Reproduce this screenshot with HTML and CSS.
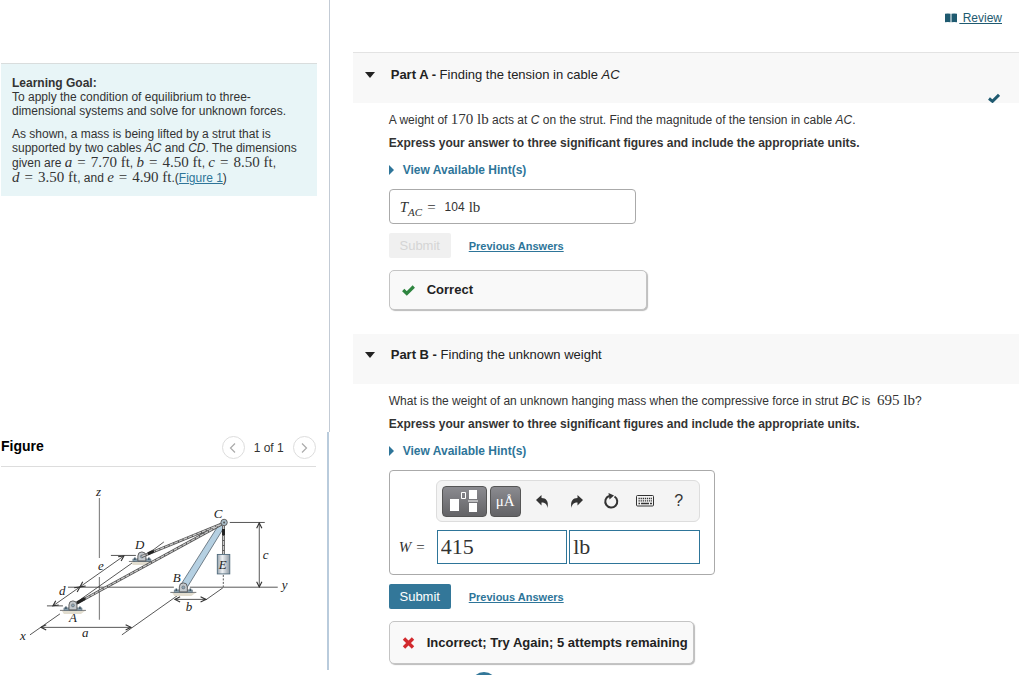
FILE: index.html
```html
<!DOCTYPE html>
<html lang="en">
<head>
    <meta charset="UTF-8">
    <meta name="viewport" content="width=device-width, initial-scale=1.0">
    <title>Cables and Strut</title>
    <link rel="stylesheet" href="styles.css">
</head>
<body>

<div class="page">
    <aside class="sidebar">
        <div class="goal-pane">
            <div class="goal">
                <h2>Learning Goal:</h2>
                <p>To apply the condition of equilibrium to three-dimensional systems and solve for unknown forces.</p>
                <p>As shown, a mass is being lifted by a strut that is supported by two cables <i>AC</i> and <i>CD</i>. The dimensions given are <span class="math"><i>a</i><span class="eq">=</span>7.70 ft</span>, <span class="math"><i>b</i><span class="eq">=</span>4.50 ft</span>, <span class="math"><i>c</i><span class="eq">=</span>8.50 ft</span>, <span class="math"><i>d</i><span class="eq">=</span>3.50 ft</span>, and <span class="math"><i>e</i><span class="eq">=</span>4.90 ft</span>.(<a href="#figure">Figure 1</a>)</p>
            </div>
        </div>

        <section class="figure" id="figure">
            <div class="figure-head">
                <h2>Figure</h2>
                <div class="pager">
                    <button type="button" aria-label="Previous figure"><svg width="10" height="12" viewBox="0 0 10 12"><path d="M7 1.500 2.500 6 7 10.500"/></svg></button>
                    <span>1 of 1</span>
                    <button type="button" aria-label="Next figure"><svg width="10" height="12" viewBox="0 0 10 12"><path d="M3 1.500 7.500 6 3 10.500"/></svg></button>
                </div>
            </div>
            <svg class="diagram" viewBox="0 480 316 170">
                <defs>
                    <marker id="tip" viewBox="0 0 8 8" refX="7" refY="4" markerWidth="7" markerHeight="7" markerUnits="userSpaceOnUse" orient="auto-start-reverse">
                        <path d="M1 1 7 4 1 7" fill="none" stroke="#333" stroke-width="1.3"/>
                    </marker>
                    <linearGradient id="metal">
                        <stop offset="0" stop-color="#98a3ad"/>
                        <stop offset=".4" stop-color="#eef1f4"/>
                        <stop offset="1" stop-color="#8e99a3"/>
                    </linearGradient>
                    <g id="support">
                        <path d="M-11 6H12L8 9-9 9Z" fill="#e2ddcf"/>
                        <path d="M-13 5.500H13" stroke="#555" stroke-width=".8"/>
                        <path d="M-9 3H9V5.500H-9Z" fill="#8aa0ae" stroke="#526572" stroke-width=".6"/>
                        <path d="M-7 1.500V4M7 1.500V4" stroke="#3f5665" stroke-width="1.600"/>
                        <path d="M-4 5V0A4 4 0 0 1 4 0V5Z" fill="#c3c9ce" stroke="#555" stroke-width=".9"/>
                        <circle cy="0.500" r="1.500" fill="#8ba5b6" stroke="#555" stroke-width=".5"/>
                    </g>
                </defs>

                <!-- axes -->
                <path class="axis" d="M99.500 498V558M99.500 577V620"/>
                <path class="line" d="M68 587.300H174M190 587.300H278M138 559 80 600M60 614 30 635M122 635 180 594M223 588 206 600"/>
                <!-- dimensions -->
                <path class="line" d="M111 555.500H136M47 606H63M230 522.500H265"/>
                <path class="dim" d="M124 556 80 587"/>
                <path class="dim" d="M80 587 53 606"/>
                <path class="dim" d="M41 627.500H131"/>
                <path class="dim" d="M175 599.500H206"/>
                <path class="dim" d="M259.500 523V587"/>

                <use href="#support" x="142" y="556"/>
                <!-- strut BC -->
                <path d="M181.500 584 219.500 524 224.500 527 187 588Z" fill="#b5d0e2" stroke="#55636e" stroke-width=".8"/>
                <!-- cables -->
                <path class="rope" d="M73 605.500 224 523M142 556.500 224 523M223.700 526V554"/>
                <path class="rope-twist" d="M73 605.500 224 523M142 556.500 224 523M223.700 526V554"/>
                <path class="knot" d="M77 603 85 598.500M148 554 154 551M223.700 529V535"/>
                <path class="line" d="M152 551 164 542"/>
                <use href="#support" x="73" y="605"/>
                <use href="#support" x="183.500" y="587"/>
                <circle cx="224.300" cy="522.500" r="3.200" fill="#a9bdc9" stroke="#555" stroke-width=".9"/>
                <circle cx="224.300" cy="522.500" r="1" fill="#555"/>
                <rect x="217.500" y="554.500" width="12.500" height="19.500" fill="url(#metal)" stroke="#4f6a7c" stroke-width=".9"/>
                <path class="line dash" d="M223.500 575V587"/>

                <text x="96" y="496">z</text>
                <text x="214" y="518">C</text>
                <text x="135" y="549">D</text>
                <text x="98" y="570">e</text>
                <text x="263" y="559">c</text>
                <text x="219" y="569">E</text>
                <text x="173" y="582">B</text>
                <text x="282" y="589">y</text>
                <text x="59" y="595">d</text>
                <text x="186" y="611">b</text>
                <text x="69" y="622">A</text>
                <text x="82" y="637">a</text>
                <text x="20" y="640">x</text>
            </svg>
        </section>
    </aside>

    <main class="content">
        <div class="topbar">
            <a class="review" href="#review"><svg width="12" height="10" viewBox="0 0 12 10"><path d="M0 .8Q3 0 5.500 .8V9.300Q3 8.500 0 9.300ZM6.500 .8Q9 0 12 .8V9.300Q9 8.500 6.500 9.300Z" fill="#1f5a70"/></svg><span>&nbsp;Review</span></a>
        </div>

        <section class="part">
            <header class="part-head lined">
                <svg class="caret" width="10" height="6" viewBox="0 0 10 6"><path d="M0 0H10L5 6Z"/></svg>
                <h3><b>Part A -</b> Finding the tension in cable <i>AC</i></h3>
                <svg class="done" width="12" height="10" viewBox="0 0 12 10"><path d="M1 5.500 4.500 8.300 11 1.800" fill="none" stroke="#1f5a70" stroke-width="3"/></svg>
            </header>
            <div class="part-body">
                <p>A weight of <span class="math">170 lb</span> acts at <i>C</i> on the strut. Find the magnitude of the tension in cable <i>AC</i>.</p>
                <p class="strong">Express your answer to three significant figures and include the appropriate units.</p>
                <a class="hints" href="#hints-a"><svg width="5" height="10" viewBox="0 0 5 10"><path d="M0 0 5 5 0 10Z"/></svg>View Available Hint(s)</a>
                <div class="answer"><span class="math"><i>T<sub>AC</sub></i><span class="eq">=</span></span><span class="value">104</span><span class="math">lb</span></div>
                <div class="actions">
                    <button class="submit" type="button" disabled>Submit</button>
                    <a href="#previous-a">Previous Answers</a>
                </div>
                <div class="feedback correct">
                    <svg width="13" height="11" viewBox="0 0 13 11"><path d="M1.200 5 4.800 8.500 11.800 1.500" fill="none" stroke="#2f8540" stroke-width="3.200"/></svg>
                    Correct
                </div>
            </div>
        </section>

        <section class="part">
            <header class="part-head">
                <svg class="caret" width="10" height="6" viewBox="0 0 10 6"><path d="M0 0H10L5 6Z"/></svg>
                <h3><b>Part B -</b> Finding the unknown weight</h3>
            </header>
            <div class="part-body">
                <p>What is the weight of an unknown hanging mass when the compressive force in strut <i>BC</i> is &nbsp;<span class="math">695 lb</span>?</p>
                <p class="strong">Express your answer to three significant figures and include the appropriate units.</p>
                <a class="hints" href="#hints-b"><svg width="5" height="10" viewBox="0 0 5 10"><path d="M0 0 5 5 0 10Z"/></svg>View Available Hint(s)</a>
                <div class="editor">
                    <div class="toolbar">
                        <button class="dark wide" type="button" aria-label="Templates">
                            <svg width="28" height="24" viewBox="0 0 28 24"><path d="M0 10H9V22H0ZM19 1H27V10H19ZM19 14H27V23H19ZM18 11.500H28V12.500H18Z" fill="#fff"/><path d="M11.500 3.500H15.500V9.500H11.500Z" fill="none" stroke="#fff"/></svg>
                        </button>
                        <button class="dark" type="button">μÅ</button>
                        <button class="tool" type="button" aria-label="Undo">
                            <svg width="13" height="13" viewBox="0 0 13 13"><path d="M0 5 5.500 0V3C10 3 13 6 11.500 13 11 9 9 7.500 5.500 7.500V10.500Z"/></svg>
                        </button>
                        <button class="tool" type="button" aria-label="Redo">
                            <svg width="13" height="13" viewBox="0 0 13 13"><path d="M13 5 7.500 0V3C3 3 0 6 1.500 13 2 9 4 7.500 7.500 7.500V10.500Z"/></svg>
                        </button>
                        <button class="tool" type="button" aria-label="Reset">
                            <svg width="16" height="16" viewBox="0 0 16 16"><path d="M11.500 3.500A6 6 0 1 1 6 3" fill="none" stroke="#333" stroke-width="2"/><path d="M5.500 0 11 2.500 6.500 6.500Z"/></svg>
                        </button>
                        <button class="tool" type="button" aria-label="Keyboard">
                            <svg width="18" height="12" viewBox="0 0 18 12"><rect x=".5" y=".5" width="17" height="10.500" rx="1" fill="none" stroke="#333"/><path d="M2.500 3.500H16M2.500 5.800H16" stroke="#333" stroke-width="1.300" stroke-dasharray="1.300 .8"/><path d="M2.500 8.500H4M5 8.500H13M14 8.500H16" stroke="#333" stroke-width="1.300"/></svg>
                        </button>
                        <button class="tool help" type="button" aria-label="Help">?</button>
                    </div>
                    <div class="entry">
                        <label class="math" for="weight"><i>W</i><span class="eq">=</span></label>
                        <input type="text" id="weight" value="415">
                        <input type="text" id="unit" value="lb" aria-label="Units">
                    </div>
                </div>
                <div class="actions">
                    <button class="submit" type="button">Submit</button>
                    <a href="#previous-b">Previous Answers</a>
                </div>
                <div class="feedback">
                    <svg width="13" height="12" viewBox="0 0 13 12"><path d="M2 1.500 11 10.500M11 1.500 2 10.500" fill="none" stroke="#d22a2e" stroke-width="3.400"/></svg>
                    Incorrect; Try Again; 5 attempts remaining
                </div>
            </div>
        </section>
        <div class="more"></div>
    </main>
</div>

</body>
</html>
```
FILE: styles.css
```css
* {
    box-sizing: border-box;
}
body {
    margin: 0;
    font-family: "Liberation Sans", Arial, sans-serif;
    font-size: 12px;
    line-height: 14px;
    color: #333;
    background: #fff;
}
h2, h3, p {
    margin: 0;
}
a {
    color: #2e7599;
}
button {
    font-family: inherit;
    padding: 0;
    border: 0;
    cursor: pointer;
}
svg {
    flex: none;
}
.page {
    display: flex;
    height: 100vh;
    overflow: hidden;
}
.math {
    font-family: "Liberation Serif", serif;
    font-size: 15px;
    line-height: 14px;
    white-space: nowrap;
}
.eq {
    margin: 0 5px;
}

/* left column */
.sidebar {
    display: flex;
    flex-direction: column;
    width: 32.2%;
    padding-bottom: 5px;
}
.goal-pane {
    flex: 1;
    padding: 63px 12px 0 1px;
    border-right: 1px solid #c3cbd5;
}
.goal {
    padding: 12px 16px 11px 11px;
    border-top: 1px solid #d9dddd;
    background: #e8f5f7;
}
.goal h2 {
    font-size: 12px;
}
.goal p + p {
    margin-top: 9px;
}
.figure {
    margin-right: 1px;
    padding: 0 11px 20px 0;
    border-right: 2px solid #b9cbdc;
}
.figure-head {
    display: flex;
    justify-content: space-between;
    align-items: center;
    height: 35px;
    margin-left: 1px;
    border-bottom: 1px solid #ddd;
}
.figure-head h2 {
    padding-bottom: 6px;
    font-size: 14px;
    color: #000;
}
.pager {
    display: flex;
    align-items: center;
    gap: 9px;
    padding-bottom: 3px;
}
.pager button {
    display: flex;
    align-items: center;
    justify-content: center;
    width: 23px;
    height: 23px;
    border: 1px solid #ddd;
    border-radius: 50%;
    background: #fff;
}
.pager path {
    fill: none;
    stroke: #aaa;
    stroke-width: 1.2;
}
.diagram {
    display: block;
    width: 100%;
    margin-top: 13px;
    font-family: "Liberation Serif", serif;
    font-size: 13px;
    font-style: italic;
    fill: #222;
}
.axis {
    stroke: #888;
    stroke-width: 1.2;
}
.line, .dim {
    fill: none;
    stroke: #444;
    stroke-width: .9;
}
.dim {
    marker-start: url(#tip);
    marker-end: url(#tip);
}
.dash {
    stroke-dasharray: 2 1.5;
}
.rope {
    fill: none;
    stroke: #555;
    stroke-width: 2.8;
}
.rope-twist {
    fill: none;
    stroke: #c9c9c9;
    stroke-width: 1.2;
    stroke-dasharray: 4 1;
}
.knot {
    fill: none;
    stroke: #222;
    stroke-width: 3;
}

/* right column */
.content {
    flex: 1;
    min-width: 0;
    padding: 0 5px 0 23px;
}
.topbar {
    display: flex;
    justify-content: flex-end;
    height: 52px;
    padding: 11px 17px 0 0;
}
.review {
    display: flex;
    align-items: center;
    gap: 2px;
    height: 14px;
    color: #1f5a70;
    text-decoration: none;
}
.review span {
    text-decoration: underline;
}
.part-head {
    display: flex;
    align-items: flex-start;
    height: 50px;
    padding: 14px 19px 0 12px;
    background: #f8f8f8;
}
.part-head.lined {
    height: 51px;
    padding-top: 15px;
    border-top: 1px solid #e3e3e3;
}
.part-head h3 {
    flex: 1;
    margin-left: 16px;
    font-size: 13px;
    font-weight: normal;
    color: #222;
}
.caret {
    margin-top: 4px;
    fill: #222;
}
.done {
    align-self: flex-end;
}
.part-body {
    padding: 9px 0 24px 36px;
}
.part-body p {
    line-height: 15px;
    margin-bottom: 8px;
}
.strong {
    font-weight: bold;
}
.hints {
    display: flex;
    align-items: center;
    gap: 9px;
    height: 14px;
    margin: 12px 0;
    font-weight: bold;
    text-decoration: none;
}
.hints path {
    fill: #2e7599;
}
.answer {
    display: flex;
    align-items: center;
    gap: 4px;
    width: 247px;
    height: 35px;
    padding: 0 10px;
    border: 1px solid #aaa;
    border-radius: 4px;
}
.answer sub {
    font-size: 11px;
    line-height: 0;
}
.actions {
    display: flex;
    align-items: center;
    gap: 18px;
    margin: 9px 0 12px;
    font-size: 11px;
    font-weight: bold;
}
.submit {
    width: 62px;
    height: 25px;
    border-radius: 2px;
    background: #337799;
    color: #fff;
    font-size: 13px;
}
.submit:disabled {
    background: #f0f0f0;
    color: #d5d5d5;
    cursor: default;
}
.feedback {
    display: flex;
    align-items: center;
    gap: 12px;
    width: fit-content;
    height: 43px;
    padding: 0 5px 0 12px;
    border: 1px solid #c4c4c4;
    border-radius: 5px;
    box-shadow: 1px 1px 1px #bbb;
    background: #f9f9f9;
    color: #222;
    font-size: 13px;
    font-weight: bold;
}
.feedback.correct {
    width: 258px;
    height: 40px;
}

/* answer editor */
.editor {
    width: 326px;
    padding: 9px 14px 10px 9px;
    border: 1px solid #aaa;
    border-radius: 4px;
}
.toolbar {
    display: flex;
    align-items: center;
    height: 42px;
    margin-left: 37px;
    padding: 0 5px;
    border: 1px solid #ddd;
    border-radius: 6px;
    background: #f4f4f4;
}
.dark {
    display: flex;
    flex: none;
    align-items: center;
    justify-content: center;
    width: 31px;
    height: 31px;
    border: 1px solid #555;
    border-radius: 4px;
    background: linear-gradient(#8b8b90, #636366);
    color: #fff;
    font-family: "Liberation Serif", serif;
    font-size: 15px;
}
.dark.wide {
    width: 45px;
    margin-right: 3px;
}
.tool {
    display: flex;
    flex: none;
    align-items: center;
    justify-content: center;
    width: 34px;
    height: 31px;
    background: none;
    color: #333;
    fill: #333;
}
.dark + .tool {
    margin-left: 5px;
}
.help {
    font-size: 16px;
}
.entry {
    display: flex;
    align-items: center;
    gap: 2px;
    margin-top: 8px;
}
.entry label {
    width: 36px;
}
.entry .eq {
    margin-right: 0;
}
.entry input {
    flex: 1;
    min-width: 0;
    height: 34px;
    padding: 0 3px;
    border: 1px solid #2e7599;
    color: #333;
    font-family: "Liberation Serif", serif;
    font-size: 22px;
}
.more {
    width: 26px;
    height: 26px;
    margin: -16px 0 0 118px;
    border-radius: 50%;
    background: #337799;
}
```
